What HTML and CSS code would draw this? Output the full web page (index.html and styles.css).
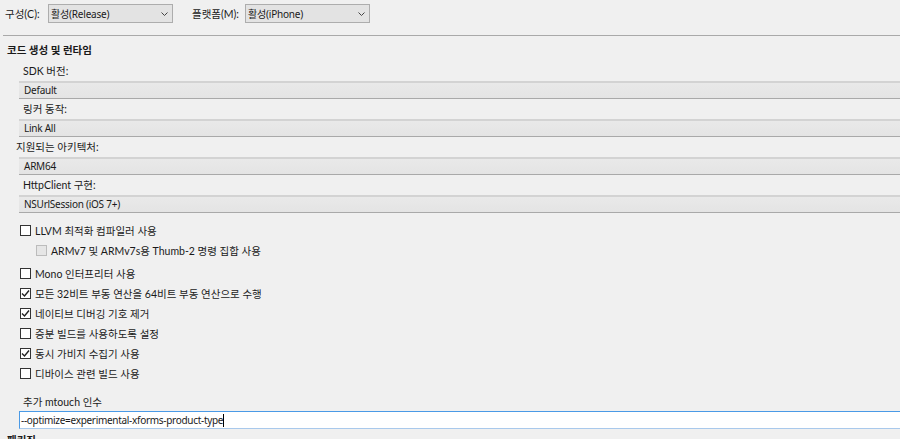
FILE: index.html
```html
<!DOCTYPE html>
<html lang="ko">
<head>
<meta charset="utf-8">
<title>iOS 빌드</title>
<link rel="stylesheet" href="styles.css">
</head>
<body>
<div class="toolbar">
  <span class="tlabel first">구성(C):</span>
  <div class="combo"><span>활성(Release)</span><svg class="chev" width="7" height="4" viewBox="0 0 7 4"><path d="M0.5 0.5 L3.5 3.5 L6.5 0.5" fill="none" stroke="#444" stroke-width="1"/></svg></div>
  <span class="tlabel second">플랫폼(M):</span>
  <div class="combo"><span>활성(iPhone)</span><svg class="chev" width="7" height="4" viewBox="0 0 7 4"><path d="M0.5 0.5 L3.5 3.5 L6.5 0.5" fill="none" stroke="#444" stroke-width="1"/></svg></div>
</div>
<div class="rule"></div>

<div class="section">코드 생성 및 런타임</div>

<div class="fields">
  <div class="flabel">SDK 버전:</div>
  <div class="bar">Default</div>
  <div class="flabel">링커 동작:</div>
  <div class="bar">Link All</div>
  <div class="flabel arch">지원되는 아키텍처:</div>
  <div class="bar">ARM64</div>
  <div class="flabel">HttpClient 구현:</div>
  <div class="bar">NSUrlSession (iOS 7+)</div>
</div>

<div class="checks">
  <div class="check"><span class="box"></span><span>LLVM 최적화 컴파일러 사용</span></div>
  <div class="check sub"><span class="box disabled"></span><span>ARMv7 및 ARMv7s용 Thumb-2 명령 집합 사용</span></div>
  <div class="check gap"><span class="box"></span><span>Mono 인터프리터 사용</span></div>
  <div class="check"><span class="box"><svg width="9" height="9" viewBox="0 0 9 9"><path d="M1 4.5 L3.5 7 L8 1.5" fill="none" stroke="#222" stroke-width="1.4"/></svg></span><span>모든 32비트 부동 연산을 64비트 부동 연산으로 수행</span></div>
  <div class="check"><span class="box"><svg width="9" height="9" viewBox="0 0 9 9"><path d="M1 4.5 L3.5 7 L8 1.5" fill="none" stroke="#222" stroke-width="1.4"/></svg></span><span>네이티브 디버깅 기호 제거</span></div>
  <div class="check"><span class="box"></span><span>증분 빌드를 사용하도록 설정</span></div>
  <div class="check"><span class="box"><svg width="9" height="9" viewBox="0 0 9 9"><path d="M1 4.5 L3.5 7 L8 1.5" fill="none" stroke="#222" stroke-width="1.4"/></svg></span><span>동시 가비지 수집기 사용</span></div>
  <div class="check"><span class="box"></span><span>디바이스 관련 빌드 사용</span></div>
</div>

<div class="mlabel">추가 mtouch 인수</div>
<div class="input"><span>--optimize=experimental-xforms-product-type</span><span class="caret"></span></div>

<div class="section next">패키징</div>
</body>
</html>
```

FILE: styles.css
```css
html, body {
  margin: 0;
  padding: 0;
  background: #f0f0f0;
  overflow: hidden;
}
body {
  font-family: "Lato", "Noto Sans CJK KR", sans-serif;
  font-size: 10.5px;
  color: #1a1a1a;
  width: 900px;
  height: 439px;
}
.toolbar {
  display: flex;
  align-items: center;
  height: 35px;
  box-sizing: border-box;
  padding: 4px 0 12px 5px;
}
.tlabel.first { width: 43px; }
.tlabel.second { width: 53px; margin-left: 19px; }
.combo {
  width: 125px;
  height: 19px;
  box-sizing: border-box;
  border: 1px solid #adadad;
  background: #e3e3e3;
  display: flex;
  align-items: center;
  justify-content: space-between;
  padding: 0 4px 0 2px;
  font-family: "Noto Sans", "Noto Sans CJK KR", sans-serif;
  font-size: 10px;
  letter-spacing: -0.2px;
}
.chev { display: block; }
.rule {
  height: 1px;
  background: #a9a9a9;
  margin-left: 3px;
}
.section {
  font-weight: bold;
  line-height: 16px;
  margin-top: 6px;
  padding-left: 7px;
}
.fields {
  margin-top: 3px;
  padding-left: 19px;
}
.flabel {
  line-height: 20px;
  height: 20px;
  padding-left: 4px;
}
.flabel.arch { margin-left: -3px; padding-left: 0; }
.bar {
  height: 18px;
  box-sizing: border-box;
  border-top: 2px solid #d3d3d3;
  border-bottom: 1px solid #a9a9a9;
  background: linear-gradient(#e9e9e9, #e4e4e4);
  padding-left: 5px;
  line-height: 15px;
  font-family: "Noto Sans", "Noto Sans CJK KR", sans-serif;
  font-size: 10px;
  letter-spacing: -0.25px;
}
.checks { margin-top: 7px; }
.check {
  display: flex;
  align-items: center;
  height: 20px;
  padding-left: 20px;
}
.check.sub { padding-left: 36px; }
.check.gap { margin-top: 3px; }
.box {
  width: 11px;
  height: 11px;
  box-sizing: border-box;
  border: 1px solid #333;
  background: #fff;
  margin-right: 4px;
  display: flex;
  align-items: center;
  justify-content: center;
}
.box svg { display: block; }
.box.disabled {
  border-color: #bcbcbc;
  background: #e6e6e6;
}
.mlabel {
  margin-top: 10px;
  line-height: 18px;
  padding-left: 23px;
}
.input {
  margin-left: 19px;
  height: 18px;
  box-sizing: border-box;
  border: 1px solid #4a9ae6;
  border-bottom-color: #a9c9ec;
  border-right: none;
  background: #fff;
  padding-left: 1px;
  display: flex;
  align-items: center;
  font-family: "Noto Sans", "Noto Sans CJK KR", sans-serif;
  font-size: 10px;
  letter-spacing: -0.3px;
}
.caret {
  width: 1px;
  height: 13px;
  background: #000;
}
.section.next { margin-top: 3px; }
```
